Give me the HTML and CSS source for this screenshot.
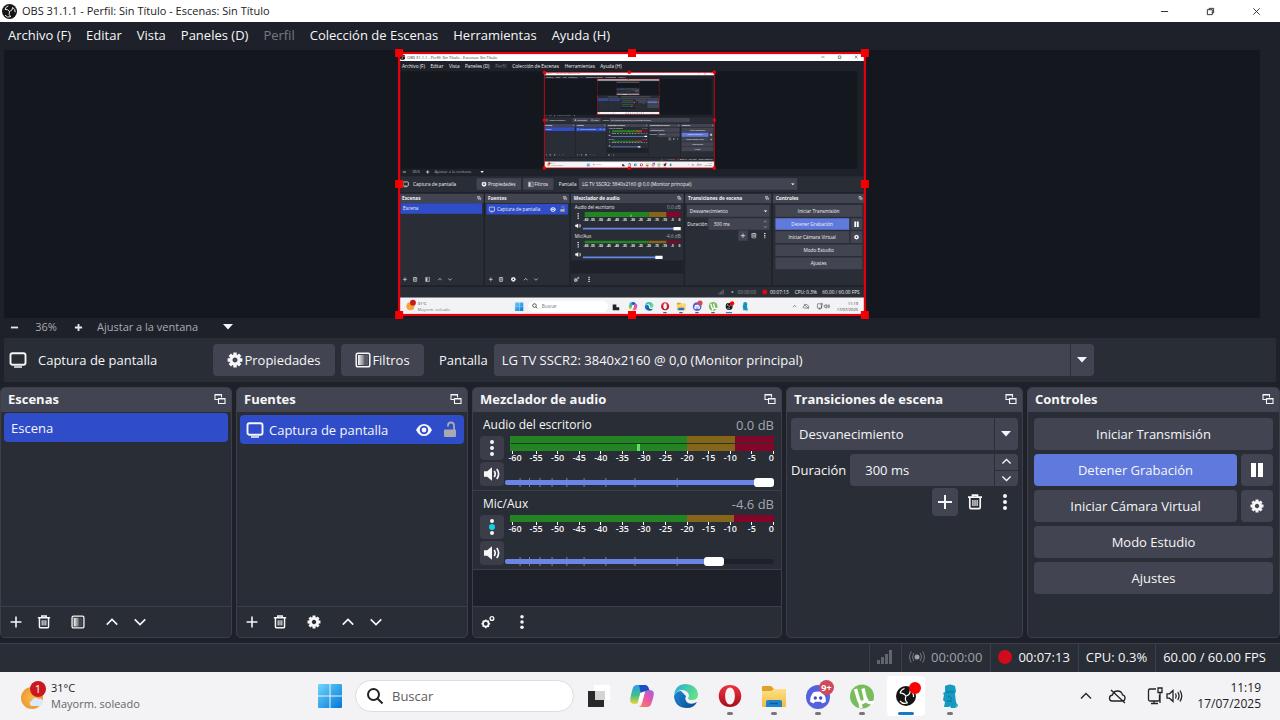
FILE: index.html
```html
<!DOCTYPE html>
<html lang="es">
<head>
<meta charset="utf-8">
<title>OBS 31.1.1 - Perfil: Sin Título - Escenas: Sin Título</title>
<link rel="stylesheet" href="styles.css">
</head>
<body>
<svg class="defs" aria-hidden="true">
  <defs>
    <linearGradient id="fade"><stop offset="0" stop-color="#fff" stop-opacity=".1"/><stop offset="1" stop-color="#fff"/></linearGradient>
    <linearGradient id="winG" x1="0" y1="0" x2="1" y2="1"><stop offset="0" stop-color="#6fd6fb"/><stop offset="1" stop-color="#0078d8"/></linearGradient>
    <linearGradient id="edgeA" x1="0" y1="0" x2="1" y2=".4"><stop offset="0" stop-color="#2aa8e0"/><stop offset="1" stop-color="#5fe08a"/></linearGradient>
    <linearGradient id="edgeB" x1="0" y1="0" x2="1" y2="1"><stop offset="0" stop-color="#1587d4"/><stop offset="1" stop-color="#0c4a8f"/></linearGradient>
    <linearGradient id="copA" x1="0" y1="0" x2="0" y2="1"><stop offset="0" stop-color="#2a9df0"/><stop offset=".55" stop-color="#43c08a"/><stop offset="1" stop-color="#f5d231"/></linearGradient>
    <linearGradient id="copB" x1="1" y1="0" x2="0" y2="1"><stop offset="0" stop-color="#9a5cf0"/><stop offset=".5" stop-color="#ee5a9c"/><stop offset="1" stop-color="#fb8a4a"/></linearGradient>
    <linearGradient id="opG" x1="0" y1="0" x2="0" y2="1"><stop offset="0" stop-color="#f0323f"/><stop offset="1" stop-color="#a50d1c"/></linearGradient>
    <linearGradient id="folG" x1="0" y1="0" x2="0" y2="1"><stop offset="0" stop-color="#fde08a"/><stop offset="1" stop-color="#f2bd3c"/></linearGradient>
    <radialGradient id="sunG"><stop offset="0" stop-color="#f8b94c"/><stop offset="1" stop-color="#ec9b34"/></radialGradient>

    <symbol id="i-plus" viewBox="0 0 16 16"><path d="M8 1.800v12.400M1.800 8h12.400" stroke="currentColor" stroke-width="1.800" fill="none"/></symbol>
    <symbol id="i-trash" viewBox="0 0 16 16"><path d="M1 3.200h14M5.500 3V1.200h5V3M2.800 3.500v9.800q0 1.400 1.400 1.400h7.600q1.400 0 1.400-1.400V3.500" stroke="currentColor" stroke-width="1.700" fill="none"/><path d="M5.900 6v6M8 6v6M10.100 6v6" stroke="currentColor" stroke-width="1.200"/></symbol>
    <symbol id="i-filter" viewBox="0 0 16 16"><rect x="1.200" y="1.200" width="13.600" height="13.600" rx="1.800" fill="none" stroke="currentColor" stroke-width="1.500"/><path d="M3 3h6v10H3z" fill="url(#fadeL)"/><path d="M9 3h4v10H9z" fill="#fff" opacity=".12"/></symbol>
    <linearGradient id="fadeL"><stop offset="0" stop-color="#fff" stop-opacity=".95"/><stop offset="1" stop-color="#fff" stop-opacity=".3"/></linearGradient>
    <symbol id="i-gear" viewBox="0 0 16 16"><path fill="none" stroke="currentColor" stroke-width="3.200" d="M8 3.900a4.100 4.100 0 1 1 0 8.200a4.100 4.100 0 1 1 0-8.200z"/><path stroke="currentColor" stroke-width="3.400" d="M8 .6v2.800M8 12.600v2.800M.6 8h2.800M12.600 8h2.800M2.800 2.800l2 2M11.200 11.200l2 2M13.200 2.800l-2 2M4.800 11.200l-2 2"/></symbol>
    <symbol id="i-up" viewBox="0 0 16 16"><path d="M2 11l6-6 6 6" stroke="currentColor" stroke-width="1.900" fill="none"/></symbol>
    <symbol id="i-down" viewBox="0 0 16 16"><path d="M2 5l6 6 6-6" stroke="currentColor" stroke-width="1.900" fill="none"/></symbol>
    <symbol id="i-caret" viewBox="0 0 10 6"><path d="M0 0h10L5 5.500z" fill="currentColor"/></symbol>
    <symbol id="i-dots" viewBox="0 0 16 16"><circle cx="8" cy="2" r="2" fill="currentColor"/><circle cx="8" cy="8" r="2" fill="currentColor"/><circle cx="8" cy="14" r="2" fill="currentColor"/></symbol>
    <symbol id="i-float" viewBox="0 0 12 12"><path d="M4 6.500H1v-5h6.500v3M4.500 5.500H11v5H4.500z" fill="none" stroke="currentColor" stroke-width="1.100"/><path d="M1 2h6.500M4.500 6H11" stroke="currentColor" stroke-width="1.100" fill="none"/></symbol>
    <symbol id="i-screen" viewBox="0 0 18 18"><rect x="1.500" y="2.300" width="15" height="11.400" rx="2" fill="none" stroke="currentColor" stroke-width="1.900"/><path d="M5 16h8" stroke="currentColor" stroke-width="1.500"/></symbol>
    <symbol id="i-speaker" viewBox="0 0 18 16"><path d="M1 5.300h3.200L9 1.300v13.400l-4.800-4H1z" fill="currentColor"/><path d="M11.200 5q2 3 0 6M13.800 3q3.600 5 0 10" fill="none" stroke="currentColor" stroke-width="1.700"/></symbol>
    <symbol id="i-eye" viewBox="0 0 16 14"><path fill="currentColor" fill-rule="evenodd" d="M0 7Q3 1 8 1t8 6q-3 6-8 6T0 7zm8-4.200a4.200 4.200 0 1 0 0 8.400a4.200 4.200 0 1 0 0-8.400z"/><circle cx="8" cy="7" r="2.400" fill="currentColor"/></symbol>
    <symbol id="i-lock" viewBox="0 0 14 17"><rect x="1" y="8.500" width="12" height="7.500" rx="1" fill="currentColor"/><path d="M11 9V4.500Q11 1.500 8 1.500T5 4.500V5.500" fill="none" stroke="currentColor" stroke-width="1.800"/></symbol>
    <symbol id="i-gears" viewBox="0 0 16 16"><circle cx="5.500" cy="10" r="3.200" fill="none" stroke="currentColor" stroke-width="2"/><path stroke="currentColor" stroke-width="1.800" d="M5.500 5v2M5.500 13v2M.5 10h2M8.500 10h2M2 6.500l1.300 1.300M7.700 12.200L9 13.500M9 6.500L7.700 7.800M3.300 12.200L2 13.500"/><circle cx="12.500" cy="4" r="2.100" fill="none" stroke="currentColor" stroke-width="1.600"/></symbol>
    <symbol id="i-obs" viewBox="0 0 20 20"><circle cx="10" cy="10" r="10" fill="#151515"/><g fill="none" stroke="#fff" stroke-width="1.200"><path d="M10 10Q7.500 6.500 4 7.200M10 10Q14.300 8.800 14.200 4.500M10 10Q8.200 14 11.500 17"/><path d="M4 7.200Q5 3.500 8.500 2.500M14.200 4.500Q18 7 17.500 11M11.500 17Q7 18.500 4 15"/></g></symbol>

    <g id="desk">
      <path fill="#1e2129" d="M0 0h1280v720H0z"/><path fill="#fff" d="M0 0h1280v22H0z"/><path fill="#15171e" d="M4 50h1256v268H4z"/>
      <path fill="#292d35" d="M4 339h1272v43H4zM0 387h232v251H0zM236 387h232v251H236zM472 387h310v251H472zM786 387h237v251H786zM1027 387h253v251h-253zM0 643h1280v29H0z"/>
      <path fill="#424551" d="M0 387h232v25H0zM236 387h232v25H236zM472 387h310v25H472zM786 387h237v25H786zM1027 387h253v25h-253zM213 344h122v32H213zM341 344h83v32h-83zM494 344h600v32H494zM791 418h227v32H791zM850 454h168v32H850zM932 488h26v28h-26zM1034 418h239v32h-239zM1241 454h32v32h-32zM1034 490h203v32h-203zM1241 490h32v32h-32zM1034 526h239v32h-239zM1034 562h239v32h-239z"/>
      <path fill="#2f4dc8" d="M4 413h224v29H4zM240 415h224v29H240z"/><path fill="#5f79dc" d="M1034 454h203v32h-203z"/>
      <path fill="#1e2129" d="M473 570h308v36H473z"/><path fill="#f3f2f5" d="M0 672h1280v48H0z"/>
      <path fill="#238423" d="M510 437h176v14H510zM510 516h176v7H510z"/><path fill="#84651a" d="M686 437h49v14h-49zM686 516h49v7h-49z"/><path fill="#84052a" d="M735 437h39v14h-39zM735 516h39v7h-39z"/>
      <path fill="#65dd65" d="M636 444h3v7h-3z"/>
      <path fill="#6b84e8" d="M505 480h250v5H505zM505 559h200v5H505z"/><path fill="#fff" d="M754 478h20v9h-20zM704 557h20v9h-20z"/>
      <g class="mini" font-size="13" fill="#f2f2f4">
        <text x="22" y="16" font-size="11" fill="#333">OBS 31.1.1 - Perfil: Sin Título - Escenas: Sin Título</text>
        <text x="8" y="40">Archivo (F)</text><text x="86" y="40">Editar</text><text x="137" y="40">Vista</text><text x="181" y="40">Paneles (D)</text><text x="264" y="40" fill="#777">Perfil</text><text x="311" y="40">Colección de Escenas</text><text x="455" y="40">Herramientas</text><text x="553" y="40">Ayuda (H)</text>
        <text x="36" y="331" font-size="11" fill="#aaa">36%</text><text x="97" y="331" font-size="11" fill="#aaa">Ajustar a la ventana</text>
        <text x="38" y="365">Captura de pantalla</text><text x="244" y="365">Propiedades</text><text x="372" y="365">Filtros</text><text x="439" y="365">Pantalla</text><text x="503" y="365">LG TV SSCR2: 3840x2160 @ 0,0 (Monitor principal)</text>
        <g font-weight="bold"><text x="8" y="404">Escenas</text><text x="244" y="404">Fuentes</text><text x="480" y="404">Mezclador de audio</text><text x="794" y="404">Transiciones de escena</text><text x="1035" y="404">Controles</text></g>
        <text x="11" y="432">Escena</text><text x="269" y="434">Captura de pantalla</text><text x="483" y="429" font-size="12">Audio del escritorio</text><text x="483" y="508" font-size="12">Mic/Aux</text><text x="774" y="429" text-anchor="end" fill="#a5a7ae">0.0 dB</text><text x="774" y="508" text-anchor="end" fill="#a5a7ae">-4.6 dB</text>
        <text x="799" y="439">Desvanecimiento</text><text x="792" y="475">Duración</text><text x="865" y="475">300 ms</text>
        <g text-anchor="middle"><text x="1153" y="439">Iniciar Transmisión</text><text x="1135" y="475">Detener Grabación</text><text x="1135" y="511">Iniciar Cámara Virtual</text><text x="1153" y="547">Modo Estudio</text><text x="1153" y="583">Ajustes</text></g>
        <text x="930" y="662" fill="#999">00:00:00</text><text x="1019" y="662">00:07:13</text><text x="1087" y="662">CPU: 0.3%</text><text x="1163" y="662">60.00 / 60.00 FPS</text>
        <g font-size="11" fill="#333"><text x="51" y="692">31°C</text><text x="51" y="708" fill="#777">Mayorm. soleado</text><text x="1261" y="692" text-anchor="end">11:19</text><text x="1261" y="708" text-anchor="end">17/07/2025</text></g>
        <g font-size="9" font-weight="bold"><text x="507" y="462">-60</text><text x="525" y="462">-55</text><text x="547" y="462">-50</text><text x="569" y="462">-45</text><text x="591" y="462">-40</text><text x="613" y="462">-35</text><text x="635" y="462">-30</text><text x="657" y="462">-25</text><text x="679" y="462">-20</text><text x="701" y="462">-15</text><text x="723" y="462">-10</text><text x="747" y="462">-5</text><text x="768" y="462">0</text>
        <text x="507" y="533">-60</text><text x="525" y="533">-55</text><text x="547" y="533">-50</text><text x="569" y="533">-45</text><text x="591" y="533">-40</text><text x="613" y="533">-35</text><text x="635" y="533">-30</text><text x="657" y="533">-25</text><text x="679" y="533">-20</text><text x="701" y="533">-15</text><text x="723" y="533">-10</text><text x="747" y="533">-5</text><text x="768" y="533">0</text></g>
      </g>
      <g color="#fff">
        <path d="M10 327h9M74 327h9M78.500 322.500v9" stroke="#eee" stroke-width="2"/>
        <use href="#i-screen" x="9" y="352" width="18" height="18"/><use href="#i-screen" x="246" y="421" width="18" height="18"/><use href="#i-gear" x="226" y="353" width="15" height="15"/><use href="#i-filter" x="354" y="353" width="16" height="16"/>
        <use href="#i-caret" x="1077" y="358" width="10" height="6"/><use href="#i-caret" x="1002" y="432" width="10" height="6"/><use href="#i-caret" x="223" y="324" width="10" height="6"/>
        <use href="#i-float" x="214" y="393" width="12" height="12"/><use href="#i-float" x="450" y="393" width="12" height="12"/><use href="#i-float" x="764" y="393" width="12" height="12"/><use href="#i-float" x="1005" y="393" width="12" height="12"/><use href="#i-float" x="1262" y="393" width="12" height="12"/>
        <use href="#i-eye" x="415" y="423" width="16" height="14"/><use href="#i-lock" x="442" y="420" width="14" height="17" color="#aaa"/>
        <use href="#i-plus" x="9" y="615" width="14" height="14"/><use href="#i-trash" x="37" y="615" width="14" height="14"/><use href="#i-filter" x="71" y="615" width="14" height="14"/><use href="#i-up" x="105" y="615" width="14" height="14"/><use href="#i-down" x="133" y="615" width="14" height="14"/>
        <use href="#i-plus" x="245" y="615" width="14" height="14"/><use href="#i-trash" x="273" y="615" width="14" height="14"/><use href="#i-gear" x="307" y="615" width="14" height="14"/><use href="#i-up" x="341" y="615" width="14" height="14"/><use href="#i-down" x="369" y="615" width="14" height="14"/><use href="#i-gears" x="480" y="614" width="16" height="16"/><use href="#i-dots" x="514" y="614" width="16" height="16"/>
        <use href="#i-dots" x="484" y="440" width="16" height="16"/><use href="#i-dots" x="484" y="519" width="16" height="16"/><use href="#i-speaker" x="483" y="467" width="18" height="16"/><use href="#i-speaker" x="483" y="546" width="18" height="16"/>
        <use href="#i-plus" x="937" y="494" width="16" height="16"/><use href="#i-trash" x="967" y="494" width="16" height="16"/><use href="#i-dots" x="997" y="494" width="16" height="16"/><use href="#i-gear" x="1250" y="499" width="14" height="14"/><path fill="#fff" d="M1251 463h5v15h-5zM1258 463h5v15h-5z"/><use href="#i-up" x="1001" y="458" width="10" height="10"/><use href="#i-down" x="1001" y="473" width="10" height="10"/>
      </g>
      <path fill="#62656d" d="M877 660h3v4h-3zM881 657h3v7h-3zM885 654h3v10h-3zM889 650h3v14h-3z"/><circle cx="916" cy="657" r="3" fill="#999"/>
      <path d="M1160 11h9M1207 8h7v7h-7zM1252 7l8 8M1260 7l-8 8" fill="none" stroke="#333" stroke-width="1.500"/>
      <use href="#i-obs" x="2" y="4" width="15" height="15"/>
      <circle cx="1005" cy="657" r="7" fill="#d10a1c"/>
      <rect x="355" y="681" width="219" height="31" rx="15" fill="#fff"/><text class="mini" x="392" y="701" font-size="13" fill="#777">Buscar</text><circle cx="372" cy="694" r="5" fill="none" stroke="#222" stroke-width="2"/><path stroke="#222" stroke-width="2" d="M376 698l4 4"/>
      <use href="#i-win" x="318" y="685" width="24" height="24"/><use href="#i-copilot" x="630" y="683" width="26" height="26"/><use href="#i-edge" x="674" y="683" width="26" height="26"/><use href="#i-opera" x="718" y="683" width="26" height="26"/><use href="#i-folder" x="762" y="683" width="26" height="26"/><use href="#i-discord" x="806" y="683" width="26" height="26"/><circle cx="827" cy="687" r="7" fill="#cf4b5b"/><use href="#i-utor" x="850" y="683" width="26" height="26"/><use href="#i-obs" x="897" y="686" width="20" height="20"/><circle cx="915" cy="688" r="6" fill="#f00"/><use href="#i-figure" x="941" y="684" width="20" height="24"/>
      <path fill="#222" d="M587 691h10v8h8v8h-18z"/><path fill="#555" d="M726 712h9v3h-9zM770 712h9v3h-9zM814 712h9v3h-9zM858 712h9v3h-9z"/><path fill="#1679cc" d="M898 712h17v3h-17z"/><circle cx="31" cy="696" r="11" fill="#efa43c"/><circle cx="38" cy="686" r="8" fill="#c9181e"/>
      <use href="#i-tray" x="1078" y="684" width="108" height="24"/>
    </g>
    <g id="handles"><rect width="1280" height="720" fill="none" stroke="#e3000f" stroke-width="6"/><path fill="#f40000" d="M-11-11h22v22h-22zM629-11h22v22h-22zM1269-11h22v22h-22zM-11 349h22v22h-22zM1269 349h22v22h-22zM-11 709h22v22h-22zM629 709h22v22h-22zM1269 709h22v22h-22z"/></g>

    <symbol id="i-win" viewBox="0 0 24 24"><path fill="url(#winG)" d="M0 1q0-1 1-1h10.500v11.500H0zM12.500 0H23q1 0 1 1v10.500H12.500zM0 12.500h11.500V24H1q-1 0-1-1zM12.500 12.500H24V23q0 1-1 1H12.500z"/></symbol>
    <symbol id="i-copilot" viewBox="0 0 26 26"><path fill="url(#copA)" d="M8 2h9q-3 0-4 4l-3 11q-1 4-4 4-5 0-4.800-4Q1.500 13 3.500 6 4.500 2 8 2z"/><path fill="#1b4fc4" d="M10 2h6q3 0 4 4l.7 2.500H15q-2 0-3 3z"/><path fill="url(#copB)" d="M18 24H9q3 0 4-4l3-11q1-2 4-2 5 0 4.800 4-.3 4-2.300 9-1 4-4.500 4z"/><path fill="#fff" d="M11.500 9.500h4l-2.500 9H9z"/></symbol>
    <symbol id="i-edge" viewBox="0 0 26 26"><path fill="url(#edgeB)" d="M1 13Q2 25 14 25q7 0 10-6-5 3-9 1-4-3-2-7L8 8q-5 0-7 5z"/><path fill="url(#edgeA)" d="M1 13Q2 1 13 1q11 1 12 10 0 6-6 6-4 0-4-2 2-2 0-5-2-3-7-3-5 1-7 6z"/><path fill="#2475c7" d="M6 13q-1 7 5 11Q5 22 3 16q0-5 6-6-3 1-3 3z"/></symbol>
    <symbol id="i-opera" viewBox="0 0 26 26"><path fill="url(#opG)" fill-rule="evenodd" d="M13 2c15 0 15 22 0 22S-2 2 13 2zm0 2.500c-6.500 0-6.500 17 0 17s6.500-17 0-17z"/></symbol>
    <symbol id="i-folder" viewBox="0 0 26 26"><path fill="#e0a126" d="M1 4q0-1 1-1h8l3 3h11q1 0 1 1v5H1z"/><path fill="url(#folG)" d="M1 8h9l3-2h12v17q0 1-1 1H2q-1 0-1-1z"/><path fill="#2082cc" d="M5 24v-5q0-2 2-2h12q2 0 2 2v5z"/><path stroke="#0f5796" stroke-width="1.400" d="M9 20.500h8"/></symbol>
    <symbol id="i-discord" viewBox="0 0 26 26"><circle cx="13" cy="14" r="12" fill="#5662dc"/><path fill="#fff" d="M8 9.500q5-2 10 0 3 4 3 9-2 2-4 1.800l-1-1.500H10l-1 1.500Q7 20.500 5 18.500q0-5 3-9z"/><circle cx="10.300" cy="15" r="1.700" fill="#4450bd"/><circle cx="15.700" cy="15" r="1.700" fill="#4450bd"/></symbol>
    <symbol id="i-utor" viewBox="0 0 26 26"><circle cx="13" cy="13.500" r="12" fill="#78bd5b"/><path d="M6.500 6l3.200 11q1 3 4 2.300 3.300-.8 2.500-4.300L14 5.500M16 14l2 4q1.500 2.500 7 1.500M11 19l1 6" fill="none" stroke="#fff" stroke-width="3.400"/></symbol>
    <symbol id="i-figure" viewBox="0 0 20 24"><path fill="#169bc0" d="M5 2q5-3 10 0l1 5-1 3 1 8 1 3-2 3h-4l-1-2-1 1H4l1-5-2-2 1-5-1-2 2-1z"/><path stroke="#0a6f96" fill="none" d="M6 8h8M8 12l4 3M7 17h5"/><circle cx="16" cy="21.500" r="1.500" fill="none" stroke="#169bc0"/></symbol>
    <symbol id="i-tray" viewBox="0 0 108 24"><g fill="none" stroke="#222" stroke-width="1.300"><path d="M4 14.500l5-5 5 5"/><path d="M37 17h-2q-2.500 0-2.500-2.800t3-3.200Q36.500 7 40.500 7t5 3.800q2.500.3 2.500 3.200T45.500 17H37M34 6l14 13"/><path d="M79 5h-6q-1.500 0-1.500 1.500v9q0 1.500 1.500 1.500h8q1.500 0 1.500-1.500V11M74 19.500h7M77 17v2.500M81 4h4v4.500h-4zM83 8.500V19"/><path d="M90 9.800h2.500L96 6.500v11l-3.500-3.300H90zM98.500 9.500q1.500 2.500 0 5M100.800 8q2.500 4 0 8M103 6.500q3.500 5.500 0 11"/></g></symbol>
  </defs>
</svg>

<header class="titlebar">
  <svg class="app-icon"><use href="#i-obs"/></svg>
  <span class="title">OBS 31.1.1 - Perfil: Sin Título - Escenas: Sin Título</span>
  <button class="win-btn" aria-label="Minimizar"><svg viewBox="0 0 10 10"><path d="M1 5h8"/></svg></button>
  <button class="win-btn" aria-label="Restaurar"><svg viewBox="0 0 10 10"><path d="M1.500 3h5.500v5.500H1.500zM3.500 3V1.500h5V6.500H7"/></svg></button>
  <button class="win-btn" aria-label="Cerrar"><svg viewBox="0 0 10 10"><path d="M1.500 1.500l7 7M8.500 1.500l-7 7"/></svg></button>
</header>

<nav class="menubar">
  <button>Archivo (F)</button><button>Editar</button><button>Vista</button><button>Paneles (D)</button><button disabled>Perfil</button><button>Colección de Escenas</button><button>Herramientas</button><button>Ayuda (H)</button>
</nav>

<main class="canvas">
  <svg class="preview" viewBox="0 0 1280 720" role="img" aria-label="Vista previa">
    <use href="#desk"/>
    <g transform="translate(399 53) scale(.365)"><use href="#desk"/>
      <g transform="translate(399 53) scale(.365)"><use href="#desk"/>
        <g transform="translate(399 53) scale(.365)"><use href="#desk"/><use href="#handles"/></g>
      <use href="#handles"/></g>
    <use href="#handles"/></g>
    <use href="#handles"/>
  </svg>
</main>

<div class="zoombar">
  <button aria-label="Reducir"><svg viewBox="0 0 10 10"><path d="M1 5h8"/></svg></button>
  <span class="zoom-value">36%</span>
  <button aria-label="Ampliar"><svg viewBox="0 0 10 10"><path d="M1 5h8M5 1v8"/></svg></button>
  <div class="combo zoom-combo"><select aria-label="Escala"><option>Ajustar a la ventana</option></select><svg class="caret"><use href="#i-caret"/></svg></div>
</div>

<section class="sourcebar">
  <div class="source-name"><svg class="ic18"><use href="#i-screen"/></svg><span>Captura de pantalla</span></div>
  <button class="btn props"><svg class="ic16"><use href="#i-gear"/></svg>Propiedades</button>
  <button class="btn filters"><svg class="ic16"><use href="#i-filter"/></svg>Filtros</button>
  <label for="display">Pantalla</label>
  <div class="combo boxed display"><select id="display"><option>LG TV SSCR2: 3840x2160 @ 0,0 (Monitor principal)</option></select><svg class="caret"><use href="#i-caret"/></svg></div>
</section>

<div class="docks">
  <section class="dock">
    <h2>Escenas<button aria-label="Desacoplar"><svg><use href="#i-float"/></svg></button></h2>
    <div class="list"><button class="row">Escena</button></div>
    <div class="tools">
      <button aria-label="Añadir escena"><svg><use href="#i-plus"/></svg></button><button aria-label="Eliminar escena"><svg><use href="#i-trash"/></svg></button><button class="wide" aria-label="Filtros de escena"><svg><use href="#i-filter"/></svg></button><button aria-label="Subir escena"><svg><use href="#i-up"/></svg></button><button aria-label="Bajar escena"><svg><use href="#i-down"/></svg></button>
    </div>
  </section>

  <section class="dock">
    <h2>Fuentes<button aria-label="Desacoplar"><svg><use href="#i-float"/></svg></button></h2>
    <div class="list sources"><div class="row"><svg class="ic18"><use href="#i-screen"/></svg><span class="grow">Captura de pantalla</span><button aria-label="Visible"><svg class="eye"><use href="#i-eye"/></svg></button><button aria-label="Bloquear"><svg class="lock"><use href="#i-lock"/></svg></button></div></div>
    <div class="tools">
      <button aria-label="Añadir fuente"><svg><use href="#i-plus"/></svg></button><button aria-label="Eliminar fuente"><svg><use href="#i-trash"/></svg></button><button class="wide" aria-label="Propiedades de fuente"><svg><use href="#i-gear"/></svg></button><button aria-label="Subir fuente"><svg><use href="#i-up"/></svg></button><button aria-label="Bajar fuente"><svg><use href="#i-down"/></svg></button>
    </div>
  </section>

  <section class="dock">
    <h2>Mezclador de audio<button aria-label="Desacoplar"><svg><use href="#i-float"/></svg></button></h2>
    <div class="mixer">
      <div class="channel">
        <div class="ch-head"><label for="vol1">Audio del escritorio</label><output>0.0 dB</output></div>
        <div class="ch-body">
          <div class="ch-btns"><button aria-label="Opciones"><svg class="ic16"><use href="#i-dots"/></svg></button><button aria-label="Silenciar"><svg class="ic18"><use href="#i-speaker"/></svg></button></div>
          <div class="ch-main">
            <div class="meter stereo"><i class="peak"></i></div>
            <div class="scale"><span>-60</span><span>-55</span><span>-50</span><span>-45</span><span>-40</span><span>-35</span><span>-30</span><span>-25</span><span>-20</span><span>-15</span><span>-10</span><span>-5</span><span>0</span></div>
            <div class="fader"><svg class="notches"><line x1="5.600%" x2="5.600%" y2="9"/><line x1="9.100%" x2="9.100%" y2="9"/><line x1="13%" x2="13%" y2="9"/><line x1="17.500%" x2="17.500%" y2="9"/><line x1="23%" x2="23%" y2="9"/><line x1="29.400%" x2="29.400%" y2="9"/><line x1="37.500%" x2="37.500%" y2="9"/><line x1="48.300%" x2="48.300%" y2="9"/><line x1="64%" x2="64%" y2="9"/></svg><input id="vol1" type="range" min="0" max="100" value="100" style="--fill:96%"></div>
          </div>
        </div>
      </div>
      <div class="channel">
        <div class="ch-head"><label for="vol2">Mic/Aux</label><output>-4.6 dB</output></div>
        <div class="ch-body">
          <div class="ch-btns"><button aria-label="Opciones"><svg class="ic16"><use href="#i-dots"/><circle cx="8" cy="8" r="3" fill="#12d3e6"/></svg></button><button aria-label="Silenciar"><svg class="ic18"><use href="#i-speaker"/></svg></button></div>
          <div class="ch-main">
            <div class="meter"></div>
            <div class="scale"><span>-60</span><span>-55</span><span>-50</span><span>-45</span><span>-40</span><span>-35</span><span>-30</span><span>-25</span><span>-20</span><span>-15</span><span>-10</span><span>-5</span><span>0</span></div>
            <div class="fader"><svg class="notches"><line x1="5.600%" x2="5.600%" y2="9"/><line x1="9.100%" x2="9.100%" y2="9"/><line x1="13%" x2="13%" y2="9"/><line x1="17.500%" x2="17.500%" y2="9"/><line x1="23%" x2="23%" y2="9"/><line x1="29.400%" x2="29.400%" y2="9"/><line x1="37.500%" x2="37.500%" y2="9"/><line x1="48.300%" x2="48.300%" y2="9"/><line x1="64%" x2="64%" y2="9"/></svg><input id="vol2" type="range" min="0" max="100" value="80" style="--fill:78%"></div>
          </div>
        </div>
      </div>
    </div>
    <div class="tools">
      <button aria-label="Propiedades de audio"><svg class="gears"><use href="#i-gears"/></svg></button><button class="wide" aria-label="Menú del mezclador"><svg><use href="#i-dots"/></svg></button>
    </div>
  </section>

  <section class="dock">
    <h2>Transiciones de escena<button aria-label="Desacoplar"><svg><use href="#i-float"/></svg></button></h2>
    <div class="form">
      <div class="combo boxed"><select aria-label="Transición"><option>Desvanecimiento</option></select><svg class="caret"><use href="#i-caret"/></svg></div>
      <div class="duration"><label for="dur">Duración</label>
        <div class="spin"><input id="dur" type="text" value="300 ms"><div class="steps"><button aria-label="Más"><svg><use href="#i-up"/></svg></button><button aria-label="Menos"><svg><use href="#i-down"/></svg></button></div></div></div>
      <div class="trans-tools"><button class="filled" aria-label="Añadir transición"><svg class="ic18"><use href="#i-plus"/></svg></button><button aria-label="Eliminar transición"><svg class="ic16"><use href="#i-trash"/></svg></button><button aria-label="Más opciones"><svg class="ic16"><use href="#i-dots"/></svg></button></div>
    </div>
  </section>

  <section class="dock">
    <h2>Controles<button aria-label="Desacoplar"><svg><use href="#i-float"/></svg></button></h2>
    <div class="controls">
      <button class="btn">Iniciar Transmisión</button>
      <div class="pair"><button class="btn active">Detener Grabación</button><button class="btn" aria-label="Pausar"><svg class="ic16" viewBox="0 0 16 16"><path fill="#fff" d="M2 1h5v14H2zM9 1h5v14H9z"/></svg></button></div>
      <div class="pair"><button class="btn">Iniciar Cámara Virtual</button><button class="btn" aria-label="Configurar cámara"><svg class="ic14"><use href="#i-gear"/></svg></button></div>
      <button class="btn">Modo Estudio</button>
      <button class="btn">Ajustes</button>
    </div>
  </section>
</div>

<footer class="status">
  <div><svg class="ic16" viewBox="0 0 16 16"><path fill="#62656d" d="M0 11h3v4H0zM4 8h3v7H4zM8 5h3v10H8zM12 1h3v14h-3z"/></svg></div>
  <div class="idle"><svg class="ic16" viewBox="0 0 16 16"><circle cx="8" cy="8" r="2.500" fill="#a0a2a8"/><path d="M4.800 4q-2.600 4 0 8M11.200 4q2.600 4 0 8M2.300 2.500q-3.400 5.500 0 11M13.700 2.500q3.400 5.500 0 11" fill="none" stroke="#74767e"/></svg>00:00:00</div>
  <div><i class="rec"></i>00:07:13</div>
  <div>CPU: 0.3%</div>
  <div class="fps">60.00 / 60.00 FPS</div>
</footer>

<div class="taskbar">
  <button class="weather">
    <svg viewBox="0 0 28 30"><circle cx="12" cy="17" r="11" fill="url(#sunG)"/><path fill="#dbe9f8" d="M11 25q-3-4 1-5.500Q14 15 18 18q5-1 5 2.500 0 4-4 4.500z"/><circle cx="18" cy="8" r="8" fill="#c9181e"/><text x="18" y="12" text-anchor="middle" font-size="11" fill="#fff">1</text></svg>
    <span><b>31°C</b><br>Mayorm. soleado</span>
  </button>
  <div class="apps">
    <button aria-label="Inicio"><svg class="ic24"><use href="#i-win"/></svg></button>
    <label class="search"><svg viewBox="0 0 18 18"><circle cx="7.500" cy="7.500" r="5.500"/><path d="M11.500 11.500l5 5"/></svg><input type="text" placeholder="Buscar" aria-label="Buscar"></label>
    <button aria-label="Vista de tareas"><svg class="ic26" viewBox="0 0 26 26"><path fill="#fff" d="M9 2h16v15H9z"/><path fill="#292929" d="M3 8h16v16H3z"/><path fill="#d4d4d4" d="M10 8h10v9H10z"/></svg></button>
    <button aria-label="Copilot"><svg class="ic26"><use href="#i-copilot"/></svg></button>
    <button aria-label="Edge"><svg class="ic26"><use href="#i-edge"/></svg></button>
    <button class="run" aria-label="Opera"><svg class="ic26"><use href="#i-opera"/></svg></button>
    <button class="run" aria-label="Explorador"><svg class="ic26"><use href="#i-folder"/></svg></button>
    <button class="run" aria-label="Discord"><svg class="ic26"><use href="#i-discord"/></svg><span class="badge">9+</span></button>
    <button class="run" aria-label="uTorrent"><svg class="ic26"><use href="#i-utor"/></svg></button>
    <button class="run current" aria-label="OBS"><svg class="ic20"><use href="#i-obs"/></svg><i class="dot"></i></button>
    <button class="run" aria-label="Aplicación"><svg class="ic24"><use href="#i-figure"/></svg></button>
  </div>
  <div class="tray"><svg><use href="#i-tray"/></svg><time>11:19<br>17/07/2025</time></div>
</div>
</body>
</html>
```
FILE: styles.css
```css
:root {
  --bg: #1e2129;
  --panel: #292d35;
  --ctl: #424551;
  --line: #3b3f4a;
  --text: #f6f6f8;
}
* { box-sizing: border-box; }
body {
  margin: 0;
  height: 100vh;
  display: flex;
  flex-direction: column;
  background: var(--bg);
  color: var(--text);
  font: 13px/18px "Open Sans", "Noto Sans", sans-serif;
  overflow: hidden;
}
button, input, select { font: inherit; color: inherit; border: 0; padding: 0; margin: 0; background: none; }
button { display: flex; align-items: center; justify-content: center; }
svg { display: block; flex: none; }
.defs { position: absolute; width: 0; height: 0; }
.mini { font-family: "Open Sans", "Noto Sans", sans-serif; }
.ic14 { width: 14px; height: 14px; }
.ic16 { width: 16px; height: 16px; }
.ic18 { width: 18px; height: 18px; }
.ic20 { width: 20px; height: 20px; }
.ic24 { width: 24px; height: 24px; }
.ic26 { width: 26px; height: 26px; }

.titlebar { display: flex; align-items: center; height: 22px; flex: none; padding-right: 1px; background: #fff; color: #222; font-size: 11px; }
.app-icon { width: 15px; height: 15px; margin: 0 5px 0 2px; }
.title { flex: 1; }
.win-btn { width: 46px; height: 22px; }
.win-btn svg { width: 9px; height: 9px; fill: none; stroke: #222; }

.menubar { display: flex; height: 28px; flex: none; padding-bottom: 2px; }
.menubar button { padding: 0 7px 0 8px; white-space: nowrap; }
.menubar button:disabled { color: #777a82; }

.canvas { flex: 1; min-height: 0; display: flex; flex-direction: column; margin: 0 20px 0 4px; padding: 3px 0; background: #15171e; }
.preview { flex: 1; min-height: 0; width: 100%; overflow: visible; }

.zoombar { display: flex; height: 18px; flex: none; align-items: center; padding-left: 4px; color: #a9abb1; font-size: 11px; }
.zoombar button { width: 20px; height: 18px; }
.zoombar button svg { width: 9px; height: 9px; fill: none; stroke: #e8e8ea; stroke-width: 2; }
.zoom-value { width: 44px; text-align: center; }
.zoom-combo { width: 151px; margin-left: 1px; }

.combo { display: grid; align-items: center; }
.combo > * { grid-area: 1 / 1; }
.combo select { appearance: none; width: 100%; height: 100%; padding-left: 8px; outline: 0; }
.caret { width: 10px; height: 6px; justify-self: end; margin-right: 7px; color: #f4f4f6; pointer-events: none; }
.boxed { height: 32px; border-radius: 4px; background: linear-gradient(#2d3039, #2d3039) right 23px top / 1px 100% no-repeat var(--ctl); }

.sourcebar { display: flex; align-items: center; gap: 6px; height: 44px; flex: none; margin: 2px 4px 5px; padding-left: 5px; background: var(--panel); }
.source-name { display: flex; gap: 11px; align-items: center; width: 198px; }
.btn { height: 32px; border-radius: 4px; background: var(--ctl); white-space: nowrap; }
.btn svg { margin-right: 1px; }
.props { width: 122px; }
.filters { width: 83px; }
.sourcebar label { margin-left: 9px; }
.display { flex: 0 1 600px; }

.docks { display: grid; grid-template-columns: 232fr 232fr 310fr 237fr 253fr; gap: 4px; height: 251px; flex: none; }
.dock { display: flex; flex-direction: column; min-width: 0; background: var(--panel); border: 1px solid var(--line); border-radius: 5px; overflow: hidden; }
.dock h2 { display: flex; align-items: center; justify-content: space-between; flex: none; height: 24px; margin: 0; padding: 0 5px 2px 7px; background: var(--ctl); font-size: 13px; font-weight: 700; }
.dock h2 svg { width: 12px; height: 12px; }
.list { flex: 1; padding: 1px 3px; }
.row { display: flex; align-items: center; justify-content: flex-start; width: 100%; height: 29px; padding: 0 7px; border-radius: 4px; background: #2f4dc8; }
.sources { padding: 3px; }
.sources .row { gap: 5px; padding: 0 7px 0 6px; }
.grow { flex: 1; }
.eye { width: 16px; height: 14px; }
.lock { width: 14px; height: 17px; margin-left: 6px; color: #aaaaae; }
.tools { display: flex; flex: none; height: 31px; padding-left: 1px; border-top: 1px solid var(--line); }
.tools button { width: 28px; }
.tools .wide { width: 40px; }
.tools svg { width: 14px; height: 14px; }

.mixer { flex: 1; background: var(--bg); }
.channel { height: 79px; padding: 4px 7px 0 7px; background: var(--panel); border-bottom: 1px solid var(--line); }
.ch-head { display: flex; justify-content: space-between; height: 20px; padding-left: 3px; font-size: 12px; }
.ch-head output { color: #a5a7ae; font-size: 13px; }
.ch-body { display: flex; gap: 1px; }
.ch-btns { display: flex; flex-direction: column; gap: 2px; }
.ch-btns button { width: 24px; height: 24px; border-radius: 4px; background: #3b3e49; }
.ch-main { flex: 1; display: flex; flex-direction: column; min-width: 0; height: 51px; }
.meter { height: 7px; margin-left: 5px; background: linear-gradient(90deg, #238423 67%, #84651a 67% 85%, #84052a 85%); flex: none; }
.meter.stereo { position: relative; height: 15px; border-left: 1px solid #238423; }
.meter.stereo::after { content: ""; position: absolute; left: 0; right: 0; top: 7px; height: 1px; background: #1c3a24; }
.peak { position: absolute; left: 48%; bottom: 0; width: 3px; height: 7px; background: #62e162; }
/* Zero-width labels centre on their tick; the outer two stay inside the bar. */
.scale { display: flex; justify-content: space-between; margin-left: 5px; font-size: 9px; font-weight: 600; line-height: 14px; }
.scale span { display: flex; justify-content: center; width: 1px; background: linear-gradient(#fff, #fff) center top / 1px 3px no-repeat; }
.scale span:first-child { padding-left: 5px; }
.scale span:last-child { justify-content: flex-end; }
.fader { display: grid; margin-top: auto; height: 9px; }
.fader > * { grid-area: 1 / 1; width: 100%; height: 9px; }
.notches { stroke: #82858e; overflow: visible; }
.fader input { appearance: none; z-index: 1; }
.fader input::-webkit-slider-runnable-track { height: 5px; border-radius: 2px; background: linear-gradient(90deg, #6b84e8 var(--fill), #1e2129 var(--fill)); }
.fader input::-webkit-slider-thumb { appearance: none; width: 20px; height: 9px; margin-top: -2px; border-radius: 3px; background: #fff; }

.form { display: flex; flex-direction: column; gap: 4px; padding: 6px 4px; }
.duration { display: flex; align-items: center; gap: 4px; }
.spin { flex: 1; display: flex; min-width: 0; height: 32px; border-radius: 4px; background: var(--ctl); }
.spin input { flex: 1; min-width: 0; padding-left: 15px; }
.steps { display: flex; flex-direction: column; width: 24px; border-left: 1px solid #2d3039; }
.steps button { flex: 1; }
.steps button + button { border-top: 1px solid #2d3039; }
.steps svg { width: 11px; height: 11px; }
.trans-tools { display: flex; justify-content: flex-end; gap: 4px; margin-top: -2px; }
.trans-tools button { width: 26px; height: 28px; border-radius: 4px; }
.trans-tools .filled { background: var(--ctl); }

.controls { display: flex; flex-direction: column; gap: 4px; padding: 6px; }
.pair { display: grid; grid-template-columns: 1fr 32px; gap: 4px; }
.pair svg { margin: 0; }
.btn.active { background: #5f79dc; }

.status { display: flex; justify-content: flex-end; flex: none; height: 29px; margin-top: 5px; background: var(--panel); border-top: 1px solid var(--line); }
.status div { display: flex; align-items: center; gap: 6px; padding: 0 8px 2px 7px; border-left: 1px solid var(--line); }
.status .fps { padding-right: 14px; }
.idle { color: #a0a2a8; }
.rec { width: 14px; height: 14px; border-radius: 50%; background: #d10a1c; }

.taskbar { display: grid; grid-template-columns: 1fr auto 1fr; align-items: center; flex: none; height: 48px; background: #f3f2f5; color: #222; }
.weather { justify-self: start; gap: 3px; padding-left: 20px; text-align: left; font-size: 11px; line-height: 16px; color: #666; }
.weather svg { width: 28px; height: 30px; }
.weather b { font-weight: 400; color: #222; }
.apps { display: flex; align-items: center; }
.apps button { position: relative; width: 44px; height: 40px; }
.search { display: flex; align-items: center; gap: 8px; width: 219px; height: 32px; margin: 0 2px 0 3px; padding-left: 10px; border: 1px solid #dddce0; border-radius: 16px; background: #fff; }
.search svg { width: 18px; height: 18px; fill: none; stroke: #222; stroke-width: 2; }
.search input { min-width: 0; flex: 1; }
.search input::placeholder { color: #5c5c5c; opacity: 1; }
.run::after { content: ""; position: absolute; bottom: 1px; width: 6px; height: 3px; border-radius: 2px; background: #77767a; }
.apps .current { width: 38px; margin: 0 3px; border-radius: 4px; background: #fff; }
.current::after { width: 16px; background: #1679cc; }
.badge { position: absolute; top: 4px; right: 6px; width: 15px; height: 15px; border-radius: 50%; background: #cf4b5b; color: #fff; font-size: 9px; font-weight: 700; line-height: 15px; text-align: center; }
.dot { position: absolute; top: 6px; right: 4px; width: 12px; height: 12px; border-radius: 50%; background: #f00; }
.tray { display: flex; align-items: center; justify-content: flex-end; gap: 12px; padding-right: 19px; font-size: 12px; line-height: 16px; text-align: right; }
.tray svg { width: 108px; height: 24px; }
```
